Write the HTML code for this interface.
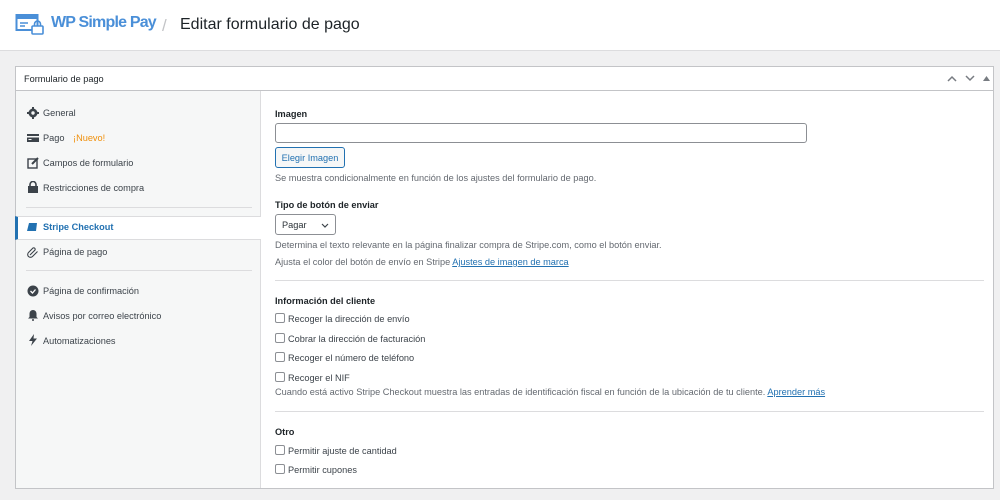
<!DOCTYPE html>
<html><head><meta charset="utf-8"><style>
*{box-sizing:border-box;margin:0;padding:0}
body{width:1000px;height:500px;background:#f0f0f1;font-family:"Liberation Sans",sans-serif;color:#3c434a;font-size:9.2px;position:relative;overflow:hidden}
.hdr{position:absolute;left:0;top:0;width:1000px;height:51px;background:#fff;border-bottom:1px solid #dcdcde}
.logo{position:absolute;left:51px;top:14px;font-size:16px;font-weight:bold;color:#4a8fd8;letter-spacing:-0.8px}
.sep{position:absolute;left:162px;top:16px;font-size:17px;color:#c3c4c7}
.title{position:absolute;left:180px;top:16px;font-size:16px;color:#1d2327}
.box{position:absolute;left:15px;top:66px;width:979px;height:423px;background:#fff;border:1px solid #c3c4c7}
.bt{height:24px;border-bottom:1px solid #c3c4c7;padding:7px 8px;color:#1d2327}
.side{position:absolute;left:0;top:24px;width:245px;bottom:0;background:#f6f7f7;border-right:1px solid #dcdcde}
.it{position:absolute;left:27px;color:#3c434a}
.ic{position:absolute;left:11px;width:12px;height:12px}
.hr{position:absolute;left:10px;width:226px;border-top:1px solid #dcdcde}
.act{position:absolute;left:-1px;top:125px;width:246px;height:24px;background:#fff;border-left:3px solid #2271b1;border-top:1px solid #dcdcde;border-bottom:1px solid #dcdcde}
.c{position:absolute;left:259px;}
b{color:#1d2327}
.cb{display:inline-block;width:10px;height:10px;border:1px solid #8c8f94;border-radius:2px;vertical-align:-1px;margin-right:3px;background:#fff}
a{color:#2271b1;text-decoration:underline}
</style></head><body>
<div class="hdr">
<svg style="position:absolute;left:15px;top:13px" width="32" height="22" viewBox="0 0 32 22"><path d="M1 2h22v4H1z" fill="#4a8fd8"/><rect x="1.5" y="2" width="21" height="15" fill="none" stroke="#4a8fd8" stroke-width="2"/><path d="M5 10h8M5 13h5" stroke="#4a8fd8" stroke-width="1.6"/><rect x="17" y="13" width="11" height="8" rx="1" fill="#fff" stroke="#4a8fd8" stroke-width="1.6"/><path d="M19.5 13v-2a3 3 0 0 1 6 0v2" fill="none" stroke="#4a8fd8" stroke-width="1.6"/></svg>
<div class="logo">WP Simple Pay</div><div class="sep">/</div><div class="title">Editar formulario de pago</div></div>
<div class="box">
<div class="bt">Formulario de pago
<svg style="position:absolute;right:36px;top:8px" width="10" height="7" viewBox="0 0 10 7"><path d="M1 6l4-4 4 4" fill="none" stroke="#787c82" stroke-width="1.5"/></svg>
<svg style="position:absolute;right:18px;top:8px" width="10" height="7" viewBox="0 0 10 7"><path d="M1 1l4 4 4-4" fill="none" stroke="#787c82" stroke-width="1.5"/></svg>
<svg style="position:absolute;right:3px;top:9px" width="7" height="5" viewBox="0 0 7 5"><path d="M0 5l3.5-5 3.5 5z" fill="#787c82"/></svg></div>
<div class="side">
<svg class="ic" style="top:16px" viewBox="0 0 12 12"><circle cx="6" cy="6" r="4.5" fill="#3c434a"/><circle cx="6" cy="6" r="1.7" fill="#f6f7f7"/><path d="M5 0h2v2H5zM5 10h2v2H5zM0 5h2v2H0zM10 5h2v2h-2z" fill="#3c434a"/></svg>
<div class="it" style="top:17px">General</div>
<svg class="ic" style="top:41px" viewBox="0 0 12 12"><rect x="0" y="2" width="12" height="8" fill="#3c434a"/><rect x="0" y="4" width="12" height="1.5" fill="#f6f7f7"/><rect x="1.5" y="7" width="3" height="1" fill="#f6f7f7"/></svg>
<div class="it" style="top:42px">Pago <span style="color:#f0900c;margin-left:6px">¡Nuevo!</span></div>
<svg class="ic" style="top:66px" viewBox="0 0 12 12"><rect x="1" y="2" width="9" height="9" fill="none" stroke="#3c434a" stroke-width="1.4"/><path d="M5 7l6-6" stroke="#3c434a" stroke-width="2"/></svg>
<div class="it" style="top:67px">Campos de formulario</div>
<svg class="ic" style="top:90px" viewBox="0 0 12 12"><rect x="1" y="5" width="10" height="7" fill="#3c434a"/><path d="M3 5V3.5a3 3 0 0 1 6 0V5" fill="none" stroke="#3c434a" stroke-width="1.6"/></svg>
<div class="it" style="top:92px">Restricciones de compra</div>
<div class="hr" style="top:116px"></div>
<div class="act"></div>
<svg class="ic" style="top:130px" viewBox="0 0 12 12"><path d="M2 2h8l-1 8H0z" fill="#2271b1"/></svg>
<div class="it" style="top:131px;color:#2271b1;font-weight:bold">Stripe Checkout</div>
<svg class="ic" style="top:155px" viewBox="0 0 12 12"><path d="M3 9l5-5a1.5 1.5 0 0 0-2-2L1.5 6.5a2.5 2.5 0 0 0 4 4l5-5" fill="none" stroke="#3c434a" stroke-width="1.1"/></svg>
<div class="it" style="top:156px">Página de pago</div>
<div class="hr" style="top:179px"></div>
<svg class="ic" style="top:194px" viewBox="0 0 12 12"><circle cx="6" cy="6" r="5.5" fill="#3c434a"/><path d="M3.5 6l2 2 3-3.5" fill="none" stroke="#fff" stroke-width="1.3"/></svg>
<div class="it" style="top:195px">Página de confirmación</div>
<svg class="ic" style="top:218px" viewBox="0 0 12 12"><path d="M6 1a3.5 3.5 0 0 1 3.5 3.5V8l1.5 1.5H1L2.5 8V4.5A3.5 3.5 0 0 1 6 1z" fill="#3c434a"/><circle cx="6" cy="11" r="1" fill="#3c434a"/></svg>
<div class="it" style="top:220px">Avisos por correo electrónico</div>
<svg class="ic" style="top:243px" viewBox="0 0 12 12"><path d="M7 0L2 7h3.5L4 12l6-7.5H6.5z" fill="#3c434a"/></svg>
<div class="it" style="top:245px">Automatizaciones</div>
</div>
<div class="c" style="top:42px"><b>Imagen</b></div>
<div class="c" style="top:56px;width:532px;height:20px;border:1px solid #8c8f94;border-radius:3px"></div>
<div class="c" style="top:80px;width:70px;height:21px;border:1px solid #2271b1;border-radius:3px;background:#f6f7f7;color:#2271b1;padding:5px 0;text-align:center">Elegir Imagen</div>
<div class="c" style="top:106px;color:#646970">Se muestra condicionalmente en función de los ajustes del formulario de pago.</div>
<div class="c" style="top:133px"><b>Tipo de botón de enviar</b></div>
<div class="c" style="top:147px;width:61px;height:21px;border:1px solid #8c8f94;border-radius:3px;padding:5px 6px;color:#2c3338">Pagar<svg style="position:absolute;right:6px;top:8px" width="8" height="5" viewBox="0 0 8 5"><path d="M1 1l3 3 3-3" fill="none" stroke="#3c434a" stroke-width="1.2"/></svg></div>
<div class="c" style="top:173px;color:#646970">Determina el texto relevante en la página finalizar compra de Stripe.com, como el botón enviar.</div>
<div class="c" style="top:190px;color:#646970">Ajusta el color del botón de envío en Stripe <a>Ajustes de imagen de marca</a></div>
<div class="c" style="top:213px;width:709px;border-top:1px solid #dcdcde"></div>
<div class="c" style="top:229px"><b>Información del cliente</b></div>
<div class="c" style="top:246px"><span class="cb"></span>Recoger la dirección de envío</div>
<div class="c" style="top:266px"><span class="cb"></span>Cobrar la dirección de facturación</div>
<div class="c" style="top:285px"><span class="cb"></span>Recoger el número de teléfono</div>
<div class="c" style="top:305px"><span class="cb"></span>Recoger el NIF</div>
<div class="c" style="top:320px;color:#646970">Cuando está activo Stripe Checkout muestra las entradas de identificación fiscal en función de la ubicación de tu cliente. <a>Aprender más</a></div>
<div class="c" style="top:344px;width:709px;border-top:1px solid #dcdcde"></div>
<div class="c" style="top:360px"><b>Otro</b></div>
<div class="c" style="top:378px"><span class="cb"></span>Permitir ajuste de cantidad</div>
<div class="c" style="top:397px"><span class="cb"></span>Permitir cupones</div>
</div>
</body></html>
